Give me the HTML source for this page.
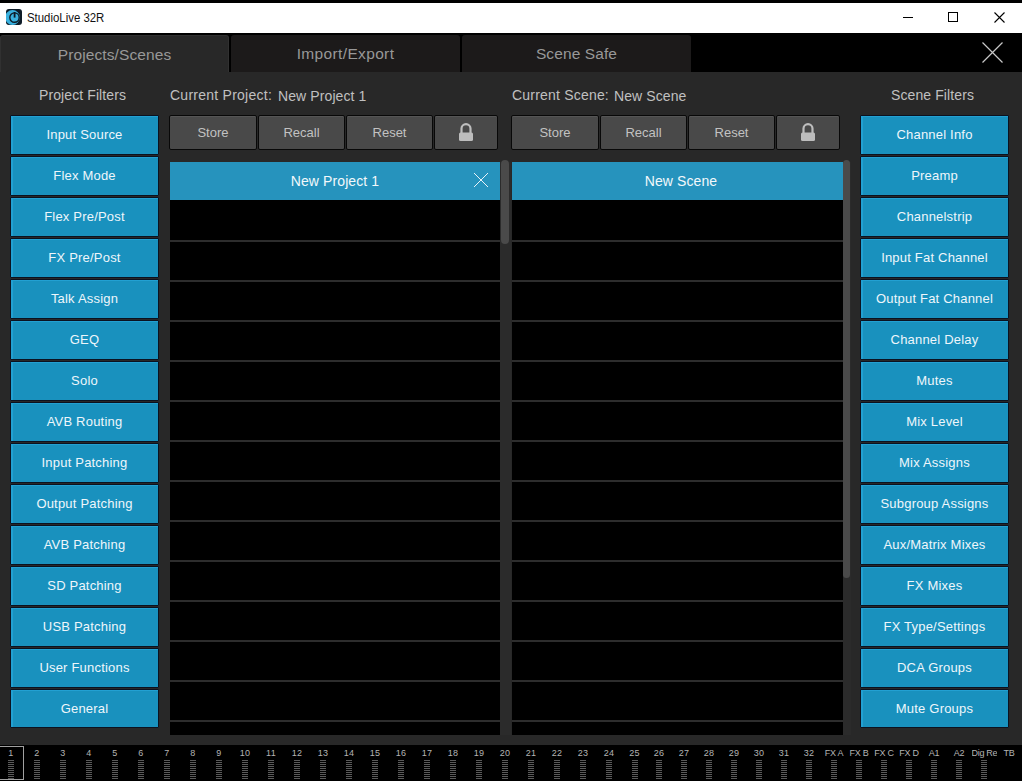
<!DOCTYPE html>
<html><head><meta charset="utf-8">
<style>
*{box-sizing:border-box;margin:0;padding:0}
html,body{width:1022px;height:781px;overflow:hidden;background:#282828;font-family:"Liberation Sans",sans-serif;position:relative}
.a{position:absolute}
#topblk{left:0;top:0;width:1022px;height:3px;background:#000}
#title{left:0;top:3px;width:1022px;height:30px;background:#fff}
#title .t{left:27px;top:8px;font-size:12px;color:#111;line-height:14px;white-space:nowrap;transform:scaleX(0.95);transform-origin:0 0}
#tabbar{left:0;top:33px;width:1022px;height:39px;background:#000}
.tab{top:2px;height:37px;border-radius:3px 3px 0 0;color:#989898;font-size:15.5px;text-align:center;line-height:37px;letter-spacing:0.1px}
#content{left:0;top:72px;width:1022px;height:673px;background:#282828}
.hd{color:#c0c0c0;font-size:14px;line-height:16px;white-space:nowrap;letter-spacing:0.1px}
.fb{width:149px;height:40px;border:1px solid #0b1220;background:#1991be;color:#eef6fb;font-size:13px;text-align:center;line-height:38px;white-space:nowrap;box-shadow:inset 2px 1px 0 #22a0d2;border-radius:1px;letter-spacing:0.2px}
.gb{height:35px;border:1px solid #080808;border-radius:2px;background:#494949;color:#c2c2c2;font-size:13px;text-align:center;line-height:33px;box-shadow:inset 0 1px 0 #555}
.list{top:162px;width:330px;height:573px;background:#000}
.lh{left:0;top:0;width:330px;height:38px;background:#2693bd;color:#f2f8fb;font-size:14px;text-align:center;line-height:38px}
.sep{left:0;width:330px;height:2px;background:#2d2d2d}
#bottom{left:0;top:745px;width:1022px;height:36px;background:#000}
.ch{top:0;width:26px;margin-left:-13px;height:36px}
.ch .n{left:0.5px;top:3px;width:25px;text-align:center;font-size:9px;line-height:10px;color:#b4b4b4;white-space:nowrap;overflow:hidden;letter-spacing:-0.2px}
.ch .m{left:10px;top:15px;width:6px;height:19px;background:repeating-linear-gradient(#5a5a5a 0 1px,transparent 1px 2px)}
</style></head><body>
<div class="a" id="topblk"></div>
<div class="a" id="title">
  <svg class="a" style="left:6px;top:6px" width="16" height="16" viewBox="0 0 16 16">
    <defs><clipPath id="ic"><rect x="0" y="0" width="16" height="16" rx="3"/></clipPath></defs>
    <rect x="0" y="0" width="16" height="16" rx="3" fill="#0e1c28"/>
    <g clip-path="url(#ic)"><circle cx="6.5" cy="8.5" r="7.4" fill="#3ab2e0"/></g>
    <circle cx="8.5" cy="8.6" r="4.7" fill="#3ab2e0" stroke="#0e1c28" stroke-width="1.4"/>
    <rect x="7.7" y="3" width="1.8" height="5.6" fill="#0e1c28"/>
  </svg>
  <div class="a t">StudioLive 32R</div>
  <div class="a" style="left:903px;top:14px;width:10px;height:1px;background:#000"></div>
  <div class="a" style="left:948px;top:9px;width:10px;height:10px;border:1px solid #000"></div>
  <svg class="a" style="left:994px;top:9px" width="11" height="11" viewBox="0 0 11 11"><path d="M0.5 0.5L10.5 10.5M10.5 0.5L0.5 10.5" stroke="#000" stroke-width="1.1"/></svg>
</div>
<div class="a" id="tabbar">
  <div class="a tab" style="left:0;width:229px;background:#282828;border:1px solid #313131;border-bottom:none">Projects/Scenes</div>
  <div class="a tab" style="left:231px;width:229px;background:#1c1a1a;letter-spacing:0.35px">Import/Export</div>
  <div class="a tab" style="left:462px;width:229px;background:#1c1a1a">Scene Safe</div>
  <svg class="a" style="left:981px;top:8px" width="23" height="23" viewBox="0 0 23 23"><path d="M1.5 1.5L21.5 21.5M21.5 1.5L1.5 21.5" stroke="#c8c8c8" stroke-width="1.2"/></svg>
</div>
<div class="a" id="content"></div>

<div class="a hd" style="left:39px;top:87px">Project Filters</div>
<div class="a hd" style="left:170px;top:87px;letter-spacing:0.25px">Current Project:</div>
<div class="a hd" style="left:278px;top:88px">New Project 1</div>
<div class="a hd" style="left:512px;top:87px;letter-spacing:0.2px">Current Scene:</div>
<div class="a hd" style="left:614px;top:88px">New Scene</div>
<div class="a hd" style="left:891px;top:87px">Scene Filters</div>
<div class="a fb" style="left:10px;top:115px">Input Source</div>
<div class="a fb" style="left:10px;top:156px">Flex Mode</div>
<div class="a fb" style="left:10px;top:197px">Flex Pre/Post</div>
<div class="a fb" style="left:10px;top:238px">FX Pre/Post</div>
<div class="a fb" style="left:10px;top:279px">Talk Assign</div>
<div class="a fb" style="left:10px;top:320px">GEQ</div>
<div class="a fb" style="left:10px;top:361px">Solo</div>
<div class="a fb" style="left:10px;top:402px">AVB Routing</div>
<div class="a fb" style="left:10px;top:443px">Input Patching</div>
<div class="a fb" style="left:10px;top:484px">Output Patching</div>
<div class="a fb" style="left:10px;top:525px">AVB Patching</div>
<div class="a fb" style="left:10px;top:566px">SD Patching</div>
<div class="a fb" style="left:10px;top:607px">USB Patching</div>
<div class="a fb" style="left:10px;top:648px">User Functions</div>
<div class="a fb" style="left:10px;top:689px;height:39px;line-height:37px">General</div>
<div class="a fb" style="left:860px;top:115px">Channel Info</div>
<div class="a fb" style="left:860px;top:156px">Preamp</div>
<div class="a fb" style="left:860px;top:197px">Channelstrip</div>
<div class="a fb" style="left:860px;top:238px">Input Fat Channel</div>
<div class="a fb" style="left:860px;top:279px">Output Fat Channel</div>
<div class="a fb" style="left:860px;top:320px">Channel Delay</div>
<div class="a fb" style="left:860px;top:361px">Mutes</div>
<div class="a fb" style="left:860px;top:402px">Mix Level</div>
<div class="a fb" style="left:860px;top:443px">Mix Assigns</div>
<div class="a fb" style="left:860px;top:484px">Subgroup Assigns</div>
<div class="a fb" style="left:860px;top:525px">Aux/Matrix Mixes</div>
<div class="a fb" style="left:860px;top:566px">FX Mixes</div>
<div class="a fb" style="left:860px;top:607px">FX Type/Settings</div>
<div class="a fb" style="left:860px;top:648px">DCA Groups</div>
<div class="a fb" style="left:860px;top:689px;height:39px;line-height:37px">Mute Groups</div>
<div class="a gb" style="left:169px;top:115px;width:88px">Store</div>
<div class="a gb" style="left:258px;top:115px;width:87px">Recall</div>
<div class="a gb" style="left:346px;top:115px;width:87px">Reset</div>
<div class="a gb" style="left:434px;top:115px;width:64px"><svg width="14" height="18" viewBox="0 0 14 18" style="margin-top:7px"><path d="M2.5 10V5.6A4.5 4.5 0 0 1 11.5 5.6V10" fill="none" stroke="#bdbdbd" stroke-width="2.2"/><rect x="0" y="9.4" width="14" height="8.5" rx="1.5" fill="#bdbdbd"/></svg></div>
<div class="a gb" style="left:511px;top:115px;width:88px">Store</div>
<div class="a gb" style="left:600px;top:115px;width:87px">Recall</div>
<div class="a gb" style="left:688px;top:115px;width:87px">Reset</div>
<div class="a gb" style="left:776px;top:115px;width:64px"><svg width="14" height="18" viewBox="0 0 14 18" style="margin-top:7px"><path d="M2.5 10V5.6A4.5 4.5 0 0 1 11.5 5.6V10" fill="none" stroke="#bdbdbd" stroke-width="2.2"/><rect x="0" y="9.4" width="14" height="8.5" rx="1.5" fill="#bdbdbd"/></svg></div>
<div class="a list" style="left:170px;width:330px">
<div class="a lh" style="width:330px;padding-left:0px;letter-spacing:0.1px">New Project 1</div>
<div class="a sep" style="width:330px;top:78px"></div>
<div class="a sep" style="width:330px;top:118px"></div>
<div class="a sep" style="width:330px;top:158px"></div>
<div class="a sep" style="width:330px;top:198px"></div>
<div class="a sep" style="width:330px;top:238px"></div>
<div class="a sep" style="width:330px;top:278px"></div>
<div class="a sep" style="width:330px;top:318px"></div>
<div class="a sep" style="width:330px;top:358px"></div>
<div class="a sep" style="width:330px;top:398px"></div>
<div class="a sep" style="width:330px;top:438px"></div>
<div class="a sep" style="width:330px;top:478px"></div>
<div class="a sep" style="width:330px;top:518px"></div>
<div class="a sep" style="width:330px;top:558px"></div>
</div>
<div class="a" style="left:500px;top:162px;width:11px;height:573px;background:#2b2b2b"></div>
<div class="a" style="left:501px;top:160px;width:8px;height:84px;background:#4a4a4a;border-radius:4px"></div>
<div class="a list" style="left:512px;width:331px">
<div class="a lh" style="width:331px;padding-left:7px;letter-spacing:0.1px">New Scene</div>
<div class="a sep" style="width:331px;top:78px"></div>
<div class="a sep" style="width:331px;top:118px"></div>
<div class="a sep" style="width:331px;top:158px"></div>
<div class="a sep" style="width:331px;top:198px"></div>
<div class="a sep" style="width:331px;top:238px"></div>
<div class="a sep" style="width:331px;top:278px"></div>
<div class="a sep" style="width:331px;top:318px"></div>
<div class="a sep" style="width:331px;top:358px"></div>
<div class="a sep" style="width:331px;top:398px"></div>
<div class="a sep" style="width:331px;top:438px"></div>
<div class="a sep" style="width:331px;top:478px"></div>
<div class="a sep" style="width:331px;top:518px"></div>
<div class="a sep" style="width:331px;top:558px"></div>
</div>
<div class="a" style="left:843px;top:162px;width:8px;height:573px;background:#2b2b2b"></div>
<div class="a" style="left:843px;top:160px;width:7px;height:418px;background:#4a4a4a;border-radius:4px"></div>
<svg class="a" style="left:473px;top:172px" width="16" height="16" viewBox="0 0 16 16"><path d="M1 1L15 15M15 1L1 15" stroke="#e8f2f8" stroke-width="1"/></svg>
<div class="a" id="bottom">
<div class="a ch" style="left:11px"><div class="a n" style="letter-spacing:0.3px">1</div><div class="a m"></div></div>
<div class="a ch" style="left:37px"><div class="a n" style="letter-spacing:0.3px">2</div><div class="a m"></div></div>
<div class="a ch" style="left:63px"><div class="a n" style="letter-spacing:0.3px">3</div><div class="a m"></div></div>
<div class="a ch" style="left:89px"><div class="a n" style="letter-spacing:0.3px">4</div><div class="a m"></div></div>
<div class="a ch" style="left:115px"><div class="a n" style="letter-spacing:0.3px">5</div><div class="a m"></div></div>
<div class="a ch" style="left:141px"><div class="a n" style="letter-spacing:0.3px">6</div><div class="a m"></div></div>
<div class="a ch" style="left:167px"><div class="a n" style="letter-spacing:0.3px">7</div><div class="a m"></div></div>
<div class="a ch" style="left:193px"><div class="a n" style="letter-spacing:0.3px">8</div><div class="a m"></div></div>
<div class="a ch" style="left:219px"><div class="a n" style="letter-spacing:0.3px">9</div><div class="a m"></div></div>
<div class="a ch" style="left:245px"><div class="a n" style="letter-spacing:0.3px">10</div><div class="a m"></div></div>
<div class="a ch" style="left:271px"><div class="a n" style="letter-spacing:0.3px">11</div><div class="a m"></div></div>
<div class="a ch" style="left:297px"><div class="a n" style="letter-spacing:0.3px">12</div><div class="a m"></div></div>
<div class="a ch" style="left:323px"><div class="a n" style="letter-spacing:0.3px">13</div><div class="a m"></div></div>
<div class="a ch" style="left:349px"><div class="a n" style="letter-spacing:0.3px">14</div><div class="a m"></div></div>
<div class="a ch" style="left:375px"><div class="a n" style="letter-spacing:0.3px">15</div><div class="a m"></div></div>
<div class="a ch" style="left:401px"><div class="a n" style="letter-spacing:0.3px">16</div><div class="a m"></div></div>
<div class="a ch" style="left:427px"><div class="a n" style="letter-spacing:0.3px">17</div><div class="a m"></div></div>
<div class="a ch" style="left:453px"><div class="a n" style="letter-spacing:0.3px">18</div><div class="a m"></div></div>
<div class="a ch" style="left:479px"><div class="a n" style="letter-spacing:0.3px">19</div><div class="a m"></div></div>
<div class="a ch" style="left:505px"><div class="a n" style="letter-spacing:0.3px">20</div><div class="a m"></div></div>
<div class="a ch" style="left:531px"><div class="a n" style="letter-spacing:0.3px">21</div><div class="a m"></div></div>
<div class="a ch" style="left:557px"><div class="a n" style="letter-spacing:0.3px">22</div><div class="a m"></div></div>
<div class="a ch" style="left:583px"><div class="a n" style="letter-spacing:0.3px">23</div><div class="a m"></div></div>
<div class="a ch" style="left:609px"><div class="a n" style="letter-spacing:0.3px">24</div><div class="a m"></div></div>
<div class="a ch" style="left:634.5px"><div class="a n" style="letter-spacing:0.3px">25</div><div class="a m"></div></div>
<div class="a ch" style="left:659px"><div class="a n" style="letter-spacing:0.3px">26</div><div class="a m"></div></div>
<div class="a ch" style="left:684px"><div class="a n" style="letter-spacing:0.3px">27</div><div class="a m"></div></div>
<div class="a ch" style="left:709px"><div class="a n" style="letter-spacing:0.3px">28</div><div class="a m"></div></div>
<div class="a ch" style="left:734px"><div class="a n" style="letter-spacing:0.3px">29</div><div class="a m"></div></div>
<div class="a ch" style="left:759px"><div class="a n" style="letter-spacing:0.3px">30</div><div class="a m"></div></div>
<div class="a ch" style="left:784px"><div class="a n" style="letter-spacing:0.3px">31</div><div class="a m"></div></div>
<div class="a ch" style="left:809px"><div class="a n" style="letter-spacing:0.3px">32</div><div class="a m"></div></div>
<div class="a ch" style="left:834px"><div class="a n" style="letter-spacing:-0.3px">FX A</div><div class="a m"></div></div>
<div class="a ch" style="left:859px"><div class="a n" style="letter-spacing:-0.3px">FX B</div><div class="a m"></div></div>
<div class="a ch" style="left:884px"><div class="a n" style="letter-spacing:-0.3px">FX C</div><div class="a m"></div></div>
<div class="a ch" style="left:909px"><div class="a n" style="letter-spacing:-0.3px">FX D</div><div class="a m"></div></div>
<div class="a ch" style="left:934px"><div class="a n" style="letter-spacing:-0.3px">A1</div><div class="a m"></div></div>
<div class="a ch" style="left:959px"><div class="a n" style="letter-spacing:-0.3px">A2</div><div class="a m"></div></div>
<div class="a ch" style="left:984px"><div class="a n" style="letter-spacing:-0.3px">Dig Ret</div><div class="a m"></div></div>
<div class="a ch" style="left:1009px"><div class="a n" style="letter-spacing:-0.3px">TB</div></div>
<div class="a" style="left:-1px;top:1px;width:25px;height:34px;border:1px solid #a0a0a0"></div>
</div>
</body></html>
